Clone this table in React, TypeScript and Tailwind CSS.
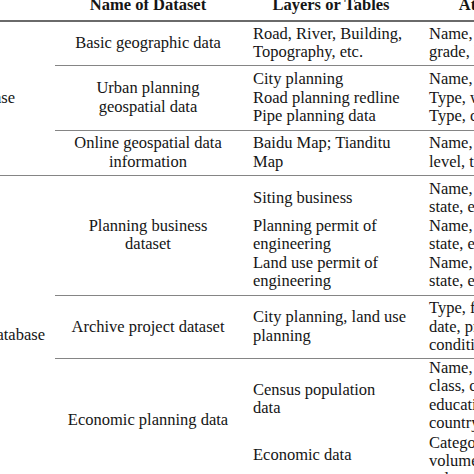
import type { ReactNode } from 'react';

const thin = 'h-[1.5px] bg-[#858585]';

function Lines({ items }: { items: string[] }) {
  return (
    <div className="flex flex-col">
      {items.map((t, i) => (
        <div key={i} className="whitespace-nowrap">
          {t}
        </div>
      ))}
    </div>
  );
}

function Row({
  h,
  name,
  layers,
  attrs,
}: {
  h: string;
  name: ReactNode;
  layers: string[];
  attrs: string[];
}) {
  return (
    <div className={`flex ${h}`}>
      <div className="w-[186px] shrink-0 flex items-center justify-center text-center">{name}</div>
      <div className="w-[180px] shrink-0 flex items-center pl-[12px]">
        <Lines items={layers} />
      </div>
      <div className="w-[148px] shrink-0 flex items-center pl-[8px]">
        <Lines items={attrs} />
      </div>
    </div>
  );
}

function SubRow({ layers, attrs }: { layers: string[]; attrs: string[] }) {
  return (
    <div className="flex">
      <div className="w-[180px] shrink-0 flex items-center pl-[12px]">
        <Lines items={layers} />
      </div>
      <div className="w-[148px] shrink-0 pl-[8px]">
        <Lines items={attrs} />
      </div>
    </div>
  );
}

export default function App() {
  return (
    <div className="w-[474px] h-[474px] overflow-hidden bg-white text-[#151515] font-['Liberation_Serif',serif] text-[16.5px] leading-[18.4px]">
      <div className="-ml-[65px] -mt-[10px] w-[634px]">
        {/* header */}
        <div className="flex h-[30px] items-center font-bold">
          <div className="w-[120px] shrink-0" />
          <div className="w-[186px] shrink-0 text-center">Name of Dataset</div>
          <div className="w-[180px] shrink-0 text-center">Layers or Tables</div>
          <div className="w-[148px] shrink-0 text-center">Attributes</div>
        </div>
        <div className="h-[2px] bg-[#6a6a6a]" />

        {/* group 1 */}
        <div className="flex">
          <div className="w-[120px] shrink-0 flex items-center justify-end pr-[40px] whitespace-nowrap">
            Database
          </div>
          <div className="flex-1 flex flex-col">
            <Row
              h="h-[42.5px]"
              name="Basic geographic data"
              layers={['Road, River, Building,', 'Topography, etc.']}
              attrs={['Name, type,', 'grade, length']}
            />
            <div className={thin} />
            <Row
              h="h-[63.5px]"
              name={
                <span>
                  Urban planning
                  <br />
                  geospatial data
                </span>
              }
              layers={['City planning', 'Road planning redline', 'Pipe planning data']}
              attrs={['Name, code', 'Type, width', 'Type, caliber']}
            />
            <div className={thin} />
            <Row
              h="h-[43.5px]"
              name={
                <span>
                  Online geospatial data
                  <br />
                  information
                </span>
              }
              layers={['Baidu Map; Tianditu', 'Map']}
              attrs={['Name, type,', 'level, time']}
            />
          </div>
        </div>
        <div className={thin} />

        {/* group 2 */}
        <div className="flex">
          <div className="w-[120px] shrink-0 flex items-center justify-end pr-[10px] whitespace-nowrap">
            Database
          </div>
          <div className="flex-1 flex flex-col">
            <div className="flex h-[118.5px]">
              <div className="w-[186px] shrink-0 flex items-center justify-center text-center">
                <span>
                  Planning business
                  <br />
                  dataset
                </span>
              </div>
              <div className="flex flex-col justify-center">
                <SubRow layers={['Siting business']} attrs={['Name, code,', 'state, etc.']} />
                <SubRow
                  layers={['Planning permit of', 'engineering']}
                  attrs={['Name, code,', 'state, etc.']}
                />
                <SubRow
                  layers={['Land use permit of', 'engineering']}
                  attrs={['Name, code,', 'state, etc.']}
                />
              </div>
            </div>
            <div className={thin} />
            <Row
              h="h-[61.5px]"
              name="Archive project dataset"
              layers={['City planning, land use', 'planning']}
              attrs={['Type, file number,', 'date, project', 'conditions']}
            />
            <div className={thin} />
            <div className="flex h-[136px]">
              <div className="w-[186px] shrink-0 flex items-center justify-center text-center pb-[14px]">
                Economic planning data
              </div>
              <div className="w-[180px] shrink-0 flex flex-col pl-[12px] pt-[22px]">
                <Lines items={['Census population', 'data']} />
                <div className="mt-[28px]">
                  <Lines items={['Economic data']} />
                </div>
              </div>
              <div className="w-[148px] shrink-0 pl-[8px]">
                <Lines items={['Name, sex,', 'class, code,', 'education,', 'country']} />
                <div className="mt-[1px]">
                  <Lines items={['Category,', 'volume,', 'value']} />
                </div>
              </div>
            </div>
          </div>
        </div>
      </div>
    </div>
  );
}
